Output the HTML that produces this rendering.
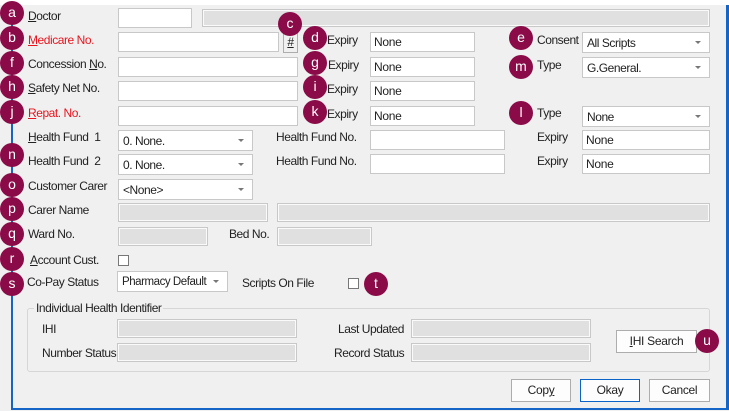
<!DOCTYPE html>
<html><head><style>
body{margin:0;width:729px;height:411px;background:#f0f0f0;position:relative;overflow:hidden;font-family:"Liberation Sans",sans-serif;font-size:12px;color:#222}
.a{position:absolute}
.l{position:absolute;white-space:nowrap;line-height:14px;letter-spacing:-0.45px}
.red{color:#e8141e}
.in{position:absolute;background:#fff;border:1px solid #c8c8c8;box-sizing:border-box;padding:2px 0 0 3px;font-size:12px;line-height:14px;letter-spacing:-0.3px}
.g{position:absolute;background:#e0e0e0;border:1px solid #c8c8c8;box-shadow:inset 0 0 0 1px #fafafa;box-sizing:border-box}
.sel{position:absolute;background:#fff;border:1px solid #c8c8c8;box-sizing:border-box;padding:3px 0 0 4px;line-height:14px;letter-spacing:-0.45px;white-space:nowrap}
.sel:after{content:"";position:absolute;right:8px;top:8px;border-left:3px solid transparent;border-right:3px solid transparent;border-top:3px solid #777}
.b{position:absolute;width:24px;height:24px;border-radius:50%;background:#8a0b48;color:#fff;text-align:center;line-height:23px;font-size:14px;margin:-12px 0 0 -12px}
.btn{position:absolute;background:#fdfdfd;border:1px solid #adadad;box-sizing:border-box;text-align:center;line-height:20px;letter-spacing:-0.3px}
.cb{position:absolute;width:11px;height:11px;background:#fff;border:1px solid #777;box-sizing:border-box}
u{text-decoration:underline}
</style></head><body>
<div class="a" style="left:0;top:0;width:729px;height:5px;background:#fff"></div>
<div class="a" style="left:11px;top:20px;width:2px;height:390px;background:#1565c8"></div>
<div class="a" style="left:11px;top:408px;width:718px;height:2px;background:#1565c8"></div>
<div class="a" style="left:726px;top:5px;width:3px;height:405px;background:#1565c8"></div>

<div class="l" style="left:28px;top:9px"><u>D</u>octor</div>
<div class="in" style="left:118px;top:8px;width:74px;height:20px"></div>
<div class="g" style="left:202px;top:9px;width:508px;height:18px"></div>

<div class="l red" style="left:28px;top:33px"><u>M</u>edicare No.</div>
<div class="in" style="left:118px;top:32px;width:161px;height:20px"></div>
<div class="btn" style="left:283px;top:32px;width:15px;height:21px;line-height:19px;background:#f0f0f0"><u>#</u></div>
<div class="l" style="left:327px;top:33px">Expiry</div>
<div class="in" style="left:370px;top:32px;width:105px;height:20px">None</div>
<div class="l" style="left:537px;top:33px">Consent</div>
<div class="sel" style="left:582px;top:32px;width:128px;height:21px">All Scripts</div>

<div class="l" style="left:28px;top:57px">Concession <u>N</u>o.</div>
<div class="in" style="left:118px;top:57px;width:180px;height:20px"></div>
<div class="l" style="left:328px;top:58px">Expiry</div>
<div class="in" style="left:370px;top:57px;width:105px;height:20px">None</div>
<div class="l" style="left:537px;top:58px">Type</div>
<div class="sel" style="left:582px;top:57px;width:128px;height:21px">G.General.</div>

<div class="l" style="left:28px;top:81px"><u>S</u>afety Net No.</div>
<div class="in" style="left:118px;top:81px;width:180px;height:20px"></div>
<div class="l" style="left:327px;top:82px">Expiry</div>
<div class="in" style="left:370px;top:81px;width:105px;height:20px">None</div>

<div class="l red" style="left:28px;top:106px"><u>R</u>epat. No.</div>
<div class="in" style="left:118px;top:106px;width:180px;height:20px"></div>
<div class="l" style="left:327px;top:107px">Expiry</div>
<div class="in" style="left:370px;top:106px;width:105px;height:20px">None</div>
<div class="l" style="left:537px;top:106px">Type</div>
<div class="sel" style="left:582px;top:106px;width:128px;height:21px">None</div>

<div class="l" style="left:28px;top:130px"><u>H</u>ealth Fund&nbsp; 1</div>
<div class="sel" style="left:118px;top:130px;width:135px;height:21px">0. None.</div>
<div class="l" style="left:276px;top:130px">Health Fund No.</div>
<div class="in" style="left:370px;top:130px;width:135px;height:20px"></div>
<div class="l" style="left:537px;top:130px">Expiry</div>
<div class="in" style="left:582px;top:130px;width:128px;height:20px">None</div>

<div class="l" style="left:28px;top:154px">Health Fund&nbsp; 2</div>
<div class="sel" style="left:118px;top:154px;width:135px;height:21px">0. None.</div>
<div class="l" style="left:276px;top:154px">Health Fund No.</div>
<div class="in" style="left:370px;top:154px;width:135px;height:20px"></div>
<div class="l" style="left:537px;top:154px">Expiry</div>
<div class="in" style="left:582px;top:154px;width:128px;height:20px">None</div>

<div class="l" style="left:28px;top:179px">Customer Carer</div>
<div class="sel" style="left:118px;top:179px;width:135px;height:21px">&lt;None&gt;</div>

<div class="l" style="left:28px;top:203px">Carer Name</div>
<div class="g" style="left:118px;top:203px;width:150px;height:19px"></div>
<div class="g" style="left:277px;top:203px;width:433px;height:19px"></div>

<div class="l" style="left:28px;top:227px">Ward No.</div>
<div class="g" style="left:118px;top:227px;width:90px;height:19px"></div>
<div class="l" style="left:229px;top:227px">Bed No.</div>
<div class="g" style="left:277px;top:227px;width:95px;height:19px"></div>

<div class="l" style="left:30px;top:253px"><u>A</u>ccount Cust.</div>
<div class="cb" style="left:118px;top:255px"></div>

<div class="l" style="left:27px;top:275px">Co-Pay Status</div>
<div class="sel" style="left:117px;top:271px;width:111px;height:21px;font-size:11.5px">Pharmacy Default</div>
<div class="l" style="left:242px;top:276px">Scripts On File</div>
<div class="cb" style="left:348px;top:278px"></div>

<div class="a" style="left:27px;top:308px;width:683px;height:64px;border:1px solid #d6d6d6;border-radius:3px;box-sizing:border-box"></div>
<div class="l" style="left:34px;top:301px;background:#f0f0f0;padding:0 2px">Individual Health Identifier</div>
<div class="l" style="left:42px;top:322px">IHI</div>
<div class="g" style="left:117px;top:319px;width:180px;height:19px"></div>
<div class="l" style="left:42px;top:346px">Number Status</div>
<div class="g" style="left:117px;top:343px;width:180px;height:19px"></div>
<div class="l" style="left:338px;top:322px">Last Updated</div>
<div class="g" style="left:411px;top:319px;width:180px;height:19px"></div>
<div class="l" style="left:334px;top:346px">Record Status</div>
<div class="g" style="left:411px;top:343px;width:180px;height:19px"></div>
<div class="btn" style="left:616px;top:330px;width:81px;height:23px"><u>I</u>HI Search</div>

<div class="btn" style="left:511px;top:379px;width:60px;height:23px">Cop<u>y</u></div>
<div class="btn" style="left:580px;top:379px;width:60px;height:23px;border-color:#0a64c8">Okay</div>
<div class="btn" style="left:649px;top:379px;width:61px;height:23px">Cancel</div>

<div class="b" style="left:12px;top:13px">a</div>
<div class="b" style="left:12px;top:38px">b</div>
<div class="b" style="left:290px;top:24px">c</div>
<div class="b" style="left:315px;top:38px">d</div>
<div class="b" style="left:521px;top:38px">e</div>
<div class="b" style="left:12px;top:63px">f</div>
<div class="b" style="left:315px;top:63px">g</div>
<div class="b" style="left:12px;top:87px">h</div>
<div class="b" style="left:315px;top:87px">i</div>
<div class="b" style="left:12px;top:112px">j</div>
<div class="b" style="left:315px;top:112px">k</div>
<div class="b" style="left:521px;top:113px">l</div>
<div class="b" style="left:521px;top:67px">m</div>
<div class="b" style="left:12px;top:155px">n</div>
<div class="b" style="left:12px;top:185px">o</div>
<div class="b" style="left:12px;top:209px">p</div>
<div class="b" style="left:12px;top:234px">q</div>
<div class="b" style="left:12px;top:259px">r</div>
<div class="b" style="left:12px;top:284px">s</div>
<div class="b" style="left:376px;top:284px">t</div>
<div class="b" style="left:707px;top:341px">u</div>
</body></html>
